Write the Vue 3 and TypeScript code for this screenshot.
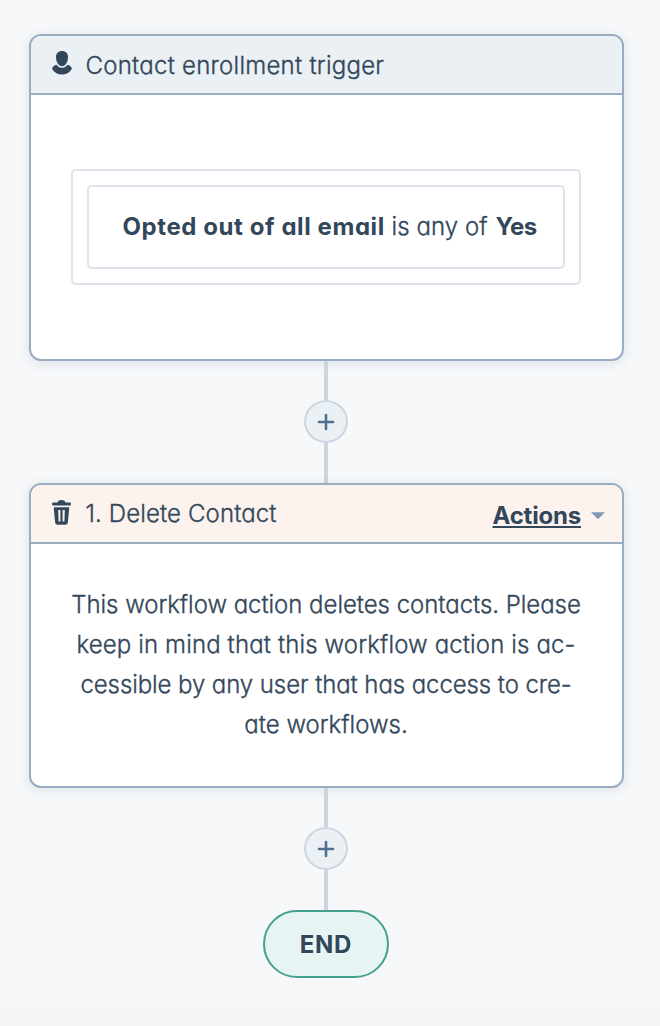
<script setup lang="ts">
const bodyLines: { text: string; cls: string }[] = [
  { text: 'This workflow action deletes contacts. Please', cls: 'l1' },
  { text: 'keep in mind that this workflow action is ac-', cls: 'l2' },
  { text: 'cessible by any user that has access to cre-', cls: 'l3' },
  { text: 'ate workflows.', cls: 'l4' },
]
</script>

<template>
  <main class="canvas">
    <section class="card trigger">
      <header class="head">
        <svg class="icon" width="22" height="28" viewBox="0 0 22 28">
          <path d="M11 1.9c3.8 0 6 2.3 6 6.1 0 4.700-2.400 9.200-6 9.200S5 12.700 5 8c0-3.800 2.200-6.100 6-6.100Z" />
          <path d="M5.400 15.700c1.500 2.100 3.500 3.100 5.600 3.100s4.100-1 5.600-3.100c2 .6 3.500 1.700 4.200 3.300.2.500 0 1-.4 1.500-2 3.300-5.300 5.100-9.400 5.100s-7.400-1.800-9.400-5.100c-.4-.5-.6-1-.4-1.500.7-1.600 2.200-2.700 4.200-3.300Z" />
        </svg>
        <span class="title t-trigger">Contact enrollment trigger</span>
      </header>
      <div class="content">
        <div class="group">
          <div class="filter">
            <span class="rule"><b>Opted out of all email</b> is any of <b>Yes</b></span>
          </div>
        </div>
      </div>
    </section>

    <div class="link">
      <i class="line"></i>
      <button class="add" aria-label="Add action">
        <svg width="18" height="18" viewBox="0 0 18 18"><path d="M9 2v14M2 9h14" /></svg>
      </button>
      <i class="line"></i>
    </div>

    <section class="card action">
      <header class="head">
        <svg class="icon trash" width="22" height="28" viewBox="0 0 22 28">
          <path d="M2.300 4.600h4.200C7 2.800 8.400 2 10.500 2s3.500.8 4 2.600h4.200c.8 0 1.300.6 1.300 1.500s-.5 1.500-1.300 1.500H2.300C1.500 7.600 1 7 1 6.100s.5-1.500 1.300-1.500Z" />
          <path fill-rule="evenodd" d="M2.700 9.200h15.600l-1.400 14.900c-.2 1.800-1 2.700-2.600 2.700H6.700c-1.600 0-2.400-.9-2.600-2.700ZM7.200 12.100l.4 11.500h1.800V12.100ZM11.600 12.100v11.500h1.800l.4-11.500Z" />
        </svg>
        <span class="title t-action">1. Delete Contact</span>
        <a class="menu">Actions</a>
        <svg class="caret" width="14" height="8" viewBox="0 0 14 8"><path d="M0 0.300h14L7 7.300Z" /></svg>
      </header>
      <p class="message">
        <span v-for="l in bodyLines" :key="l.cls" class="row"><span :class="l.cls">{{ l.text }}</span></span>
      </p>
    </section>

    <div class="link">
      <i class="line"></i>
      <button class="add" aria-label="Add action">
        <svg width="18" height="18" viewBox="0 0 18 18"><path d="M9 2v14M2 9h14" /></svg>
      </button>
      <i class="line"></i>
    </div>

    <div class="end"><span>END</span></div>
  </main>
</template>

<style>
body {
  margin: 0;
  background: #f5f8fa;
}
</style>

<style scoped>
.canvas {
  box-sizing: border-box;
  width: 660px;
  height: 1026px;
  padding: 34px 36px 0 29px;
  display: flex;
  flex-direction: column;
  align-items: center;
  overflow: hidden;
  background: linear-gradient(#f6f8fa 0, #f6f8fa 990px, #f2f4f6 1026px);
  color: #33475b;
  font-family: Inter, "Noto Sans", sans-serif;
  font-feature-settings: "cv11";
  font-size: 24px;
}
.card {
  box-sizing: border-box;
  width: 595px;
  flex: none;
  border: 2px solid #99acc2;
  border-radius: 12px;
  background: #fff;
  box-shadow: 0 2px 12px rgba(45, 62, 80, 0.12);
  overflow: hidden;
}
.trigger { height: 327px; }
.action { height: 305px; }
.head {
  box-sizing: border-box;
  height: 59px;
  padding-left: 20px;
  display: flex;
  align-items: center;
  border-bottom: 2px solid #99acc2;
  background: #eaf0f4;
  white-space: nowrap;
}
.action .head { background: #fdf3ee; }
.icon {
  flex: none;
  fill: #33475b;
  margin-top: -3px;
}
.title {
  margin-left: 12.5px;
  font-weight: 300;
  -webkit-text-stroke: 0.35px #33475b;
}
.t-trigger {
  margin-top: 2px;
  letter-spacing: 0.25px;
}
.t-action { letter-spacing: 0.12px; }
.content {
  height: 264px;
  display: flex;
  align-items: center;
  justify-content: center;
}
.group {
  box-sizing: border-box;
  width: 510px;
  height: 116px;
  margin-right: 1px;
  padding: 14px;
  border: 2px solid #dfe3eb;
  border-radius: 5px;
}
.filter {
  box-sizing: border-box;
  height: 84px;
  border: 2px solid #dfe3eb;
  border-radius: 5px;
  padding: 0 0 2px 33.5px;
  display: flex;
  align-items: center;
  white-space: nowrap;
}
.rule {
  font-weight: 300;
  letter-spacing: 0.05px;
  -webkit-text-stroke: 0.35px #33475b;
}
.rule b {
  font-weight: 700;
  letter-spacing: 0.58px;
  -webkit-text-stroke: 0;
}
.rule b:last-child { letter-spacing: -0.4px; margin-left: 1px; }
.menu {
  margin: 3px 0 0 auto;
  font-weight: 700;
  letter-spacing: -0.2px;
  text-decoration: underline;
  text-decoration-thickness: 2px;
  text-underline-offset: 2px;
}
.caret {
  fill: #7c98b6;
  margin: 4px 17px 0 10px;
}
.message {
  margin: 41px 1px 0 0;
  font-weight: 300;
  -webkit-text-stroke: 0.35px #33475b;
  white-space: nowrap;
}
.row {
  display: flex;
  justify-content: center;
  height: 40px;
  line-height: 40px;
}
.l1 { letter-spacing: -0.04px; }
.l2 { letter-spacing: 0.13px; }
.l3 { letter-spacing: -0.09px; }
.link {
  height: 122px;
  width: 44px;
  margin-right: 1px;
  flex: none;
  display: flex;
  flex-direction: column;
  align-items: center;
}
.line {
  flex: 1;
  width: 4px;
  background: #cbd6e2;
}
.line:first-child { flex: 0 0 39px; }
.add {
  box-sizing: border-box;
  width: 44px;
  height: 43px;
  padding: 0;
  border: 2px solid #cbd6e2;
  border-radius: 50%;
  background: #eaf0f4;
  display: flex;
  align-items: center;
  justify-content: center;
}
.add path {
  stroke: #516f90;
  stroke-width: 2.6;
  stroke-linecap: round;
}
.end {
  box-sizing: border-box;
  width: 126px;
  height: 68px;
  margin-right: 1px;
  flex: none;
  border: 2px solid #45a18d;
  border-radius: 34px;
  background: #e6f5f4;
  display: flex;
  align-items: center;
  justify-content: center;
  font-weight: 700;
  letter-spacing: 0.7px;
}
</style>
